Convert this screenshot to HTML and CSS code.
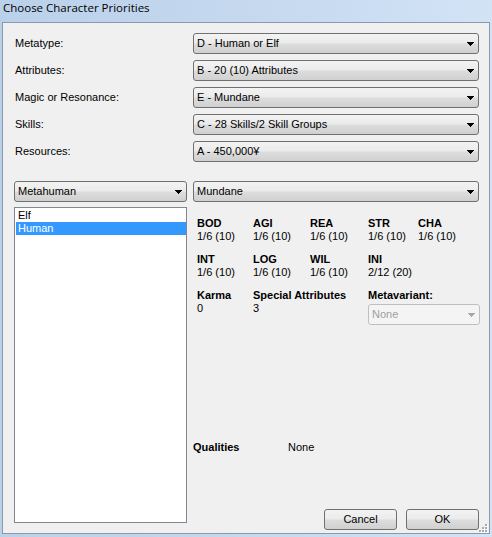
FILE: index.html
```html
<!DOCTYPE html>
<html>
<head>
<meta charset="utf-8">
<title>Choose Character Priorities</title>
<link rel="stylesheet" href="styles.css">
</head>
<body>
<div class="window">
  <div class="titlebar">Choose Character Priorities</div>
  <div class="client">
    <div class="priorities">
      <div class="plabel">Metatype:</div>
      <div class="combo"><span class="ctext">D - Human or Elf</span><svg class="arrow" width="7" height="4" viewBox="0 0 7 4"><path d="M0 0h7v1H0zM1 1h5v1H1zM2 2h3v1H2zM3 3h1v1H3z"/></svg></div>
      <div class="plabel">Attributes:</div>
      <div class="combo"><span class="ctext">B - 20 (10) Attributes</span><svg class="arrow" width="7" height="4" viewBox="0 0 7 4"><path d="M0 0h7v1H0zM1 1h5v1H1zM2 2h3v1H2zM3 3h1v1H3z"/></svg></div>
      <div class="plabel">Magic or Resonance:</div>
      <div class="combo"><span class="ctext">E - Mundane</span><svg class="arrow" width="7" height="4" viewBox="0 0 7 4"><path d="M0 0h7v1H0zM1 1h5v1H1zM2 2h3v1H2zM3 3h1v1H3z"/></svg></div>
      <div class="plabel">Skills:</div>
      <div class="combo"><span class="ctext">C - 28 Skills/2 Skill Groups</span><svg class="arrow" width="7" height="4" viewBox="0 0 7 4"><path d="M0 0h7v1H0zM1 1h5v1H1zM2 2h3v1H2zM3 3h1v1H3z"/></svg></div>
      <div class="plabel">Resources:</div>
      <div class="combo"><span class="ctext">A - 450,000¥</span><svg class="arrow" width="7" height="4" viewBox="0 0 7 4"><path d="M0 0h7v1H0zM1 1h5v1H1zM2 2h3v1H2zM3 3h1v1H3z"/></svg></div>
    </div>

    <div class="selectors">
      <div class="combo combo-meta"><span class="ctext">Metahuman</span><svg class="arrow" width="7" height="4" viewBox="0 0 7 4"><path d="M0 0h7v1H0zM1 1h5v1H1zM2 2h3v1H2zM3 3h1v1H3z"/></svg></div>
      <div class="combo combo-wide"><span class="ctext">Mundane</span><svg class="arrow" width="7" height="4" viewBox="0 0 7 4"><path d="M0 0h7v1H0zM1 1h5v1H1zM2 2h3v1H2zM3 3h1v1H3z"/></svg></div>
    </div>

    <div class="main">
      <div class="listbox">
        <div class="item">Elf</div>
        <div class="item selected">Human</div>
      </div>
      <div class="details">
        <div class="attrs">
          <div class="attr"><b>BOD</b><span>1/6 (10)</span></div>
          <div class="attr"><b>AGI</b><span>1/6 (10)</span></div>
          <div class="attr"><b>REA</b><span>1/6 (10)</span></div>
          <div class="attr"><b>STR</b><span>1/6 (10)</span></div>
          <div class="attr"><b>CHA</b><span>1/6 (10)</span></div>
          <div class="attr"><b>INT</b><span>1/6 (10)</span></div>
          <div class="attr"><b>LOG</b><span>1/6 (10)</span></div>
          <div class="attr"><b>WIL</b><span>1/6 (10)</span></div>
          <div class="attr span2"><b>INI</b><span>2/12 (20)</span></div>
          <div class="attr"><b>Karma</b><span>0</span></div>
          <div class="attr span2"><b>Special Attributes</b><span>3</span></div>
          <div class="attr span2"><b>Metavariant:</b>
            <div class="combo combo-disabled"><span class="ctext">None</span><svg class="arrow" width="7" height="4" viewBox="0 0 7 4"><path d="M0 0h7v1H0zM1 1h5v1H1zM2 2h3v1H2zM3 3h1v1H3z"/></svg></div>
          </div>
        </div>
        <div class="qualities"><b>Qualities</b><span>None</span></div>
        <div class="buttons">
          <div class="button">Cancel</div>
          <div class="button">OK</div>
        </div>
      </div>
    </div>

    <svg class="grip" width="9" height="9" viewBox="0 0 9 9">
      <g fill="#fff">
        <rect x="7" y="1" width="2" height="2"/>
        <rect x="4" y="4" width="2" height="2"/><rect x="7" y="4" width="2" height="2"/>
        <rect x="1" y="7" width="2" height="2"/><rect x="4" y="7" width="2" height="2"/><rect x="7" y="7" width="2" height="2"/>
      </g>
      <g fill="#a8adb3">
        <rect x="6" y="0" width="2" height="2"/>
        <rect x="3" y="3" width="2" height="2"/><rect x="6" y="3" width="2" height="2"/>
        <rect x="0" y="6" width="2" height="2"/><rect x="3" y="6" width="2" height="2"/><rect x="6" y="6" width="2" height="2"/>
      </g>
    </svg>
  </div>
</div>
</body>
</html>
```

FILE: styles.css
```css
html, body {
  margin: 0;
  padding: 0;
}

body {
  width: 492px;
  height: 537px;
  overflow: hidden;
  font-family: "Liberation Sans", Arial, sans-serif;
  font-size: 11px;
  color: #000;
}

.window {
  height: 537px;
  box-sizing: border-box;
  padding: 0 2px 3px 2px;
  display: flex;
  flex-direction: column;
  background: linear-gradient(to right, #bad1ea 0%, #c6d9ef 55%, #d2e3f6 100%);
}

.titlebar {
  height: 22px;
  line-height: 16px;
  padding-left: 1px;
  font-family: "Open Sans", "Noto Sans", sans-serif;
  font-size: 11.5px;
  color: #000;
  white-space: nowrap;
}

.client {
  position: relative;
  flex: 1;
  box-sizing: border-box;
  border: 1px solid #8a99ab;
  background: #f0f0f0;
  padding: 10px 0 0 11px;
}

.priorities {
  display: grid;
  grid-template-columns: 179px 286px;
  grid-auto-rows: 21px;
  row-gap: 6px;
}

.plabel {
  line-height: 21px;
  padding-left: 1px;
  white-space: nowrap;
}

.combo {
  box-sizing: border-box;
  height: 21px;
  border: 1px solid #707070;
  border-radius: 3px;
  background: linear-gradient(to bottom, #f3f3f3 0%, #ebebeb 48%, #dddddd 52%, #d0d0d0 100%);
  display: flex;
  align-items: center;
  padding: 0 4px 0 3px;
  white-space: nowrap;
}

.ctext {
  flex: 1;
  line-height: 13px;
}

.arrow {
  display: block;
  fill: #000;
  shape-rendering: crispEdges;
}

.selectors {
  margin-top: 19px;
  display: flex;
  gap: 6px;
}

.combo-meta {
  width: 173px;
}

.combo-wide {
  width: 286px;
}

.main {
  margin-top: 5px;
  height: 323px;
  display: flex;
  gap: 6px;
}

.listbox {
  box-sizing: border-box;
  width: 173px;
  height: 316px;
  border: 1px solid #828790;
  background: #fff;
  padding: 1px 0 1px 1px;
}

.item {
  line-height: 13px;
  padding-left: 2px;
}

.item.selected {
  background: #3399ff;
  color: #fff;
}

.details {
  width: 286px;
  display: flex;
  flex-direction: column;
}

.attrs {
  display: grid;
  grid-template-columns: 56px 57px 58px 50px 61px;
  row-gap: 10px;
  margin: 10px 0 0 4px;
  line-height: 13px;
}

.attr {
  white-space: nowrap;
}

.attr b {
  display: block;
  font-weight: bold;
}

.attr span {
  display: block;
}

.span2 {
  grid-column: span 2;
}

.combo-disabled {
  width: 112px;
  margin-top: 2px;
  border-color: #bcc0c4;
  background: #f4f4f4;
  color: #a0a0a0;
}

.combo-disabled .arrow {
  fill: #a6a6a6;
}

.qualities {
  margin-top: 116px;
  display: flex;
  line-height: 13px;
}

.qualities b {
  width: 95px;
}

.buttons {
  margin-top: auto;
  display: flex;
  justify-content: flex-end;
  gap: 9px;
}

.button {
  box-sizing: border-box;
  width: 73px;
  height: 21px;
  border: 1px solid #707070;
  border-radius: 3px;
  background: linear-gradient(to bottom, #f3f3f3 0%, #ebebeb 48%, #dddddd 52%, #d0d0d0 100%);
  text-align: center;
  line-height: 19px;
}

.grip {
  position: absolute;
  right: 1px;
  bottom: 0;
  shape-rendering: crispEdges;
}
```
